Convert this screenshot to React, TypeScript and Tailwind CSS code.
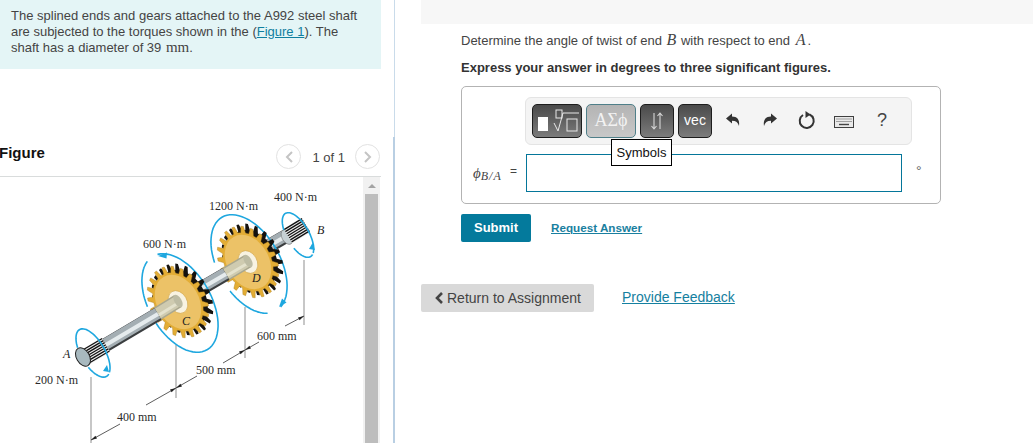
import React from "react";

function pt(cx: number, cy: number, rx: number, ry: number, rot: number, a: number) {
  const r = (rot * Math.PI) / 180;
  const x = rx * Math.cos(a);
  const y = ry * Math.sin(a);
  return [cx + x * Math.cos(r) - y * Math.sin(r), cy + x * Math.sin(r) + y * Math.cos(r)];
}

function gearPath(cx: number, cy: number, rx: number, ry: number, rot: number, teeth: number) {
  const out: string[] = [];
  const step = (2 * Math.PI) / teeth;
  for (let i = 0; i < teeth; i++) {
    const a = i * step;
    const seq: [number, number][] = [
      [a, 0.82],
      [a + step * 0.2, 0.82],
      [a + step * 0.36, 1],
      [a + step * 0.64, 1],
      [a + step * 0.8, 0.82],
    ];
    for (const [t, k] of seq) {
      const p = pt(cx, cy, rx * k, ry * k, rot, t);
      out.push(`${p[0].toFixed(1)} ${p[1].toFixed(1)}`);
    }
  }
  return "M" + out.join("L") + "Z";
}

function arc(cx: number, cy: number, rx: number, ry: number, rot: number, a0: number, a1: number) {
  const pts: string[] = [];
  const n = 48;
  for (let i = 0; i <= n; i++) {
    const p = pt(cx, cy, rx, ry, rot, ((a0 + ((a1 - a0) * i) / n) * Math.PI) / 180);
    pts.push(`${p[0].toFixed(1)} ${p[1].toFixed(1)}`);
  }
  return "M" + pts.join("L");
}

const ROT = 60;
const BLUE = "#1ea7df";

function Gear({ cx, cy }: { cx: number; cy: number }) {
  return (
    <g>
      <path d={gearPath(cx + 4.5, cy - 2.6, 38, 28, ROT, 20)} fill="#15120e" />
      <path d={gearPath(cx, cy, 38, 28, ROT, 20)} fill="#e3ad35" stroke="#a87d22" strokeWidth="0.4" />
      <ellipse cx={cx} cy={cy} rx={29} ry={21} transform={`rotate(${ROT} ${cx} ${cy})`} fill="#ecc267" />
      <ellipse cx={cx} cy={cy} rx={12} ry={9} transform={`rotate(${ROT} ${cx} ${cy})`} fill="#f8f3e2" stroke="#d2a545" strokeWidth="0.6" />
    </g>
  );
}

function Hub({ x1, y1, x2, y2 }: { x1: number; y1: number; x2: number; y2: number }) {
  return (
    <g>
      <line x1={x1} y1={y1} x2={x2} y2={y2} stroke="#a9a78f" strokeWidth={14} />
      <line x1={x1} y1={y1} x2={x2} y2={y2} stroke="#cfcbb0" strokeWidth={11} />
      <line x1={x1 + 1} y1={y1 + 1.5} x2={x2 + 1} y2={y2 + 1.5} stroke="#e4e2cd" strokeWidth={3} />
      <ellipse cx={x2} cy={y2} rx={7} ry={3.6} transform={`rotate(${ROT} ${x2} ${y2})`} fill="#bdbca4" />
    </g>
  );
}

function ShaftSeg({ x1, y1, x2, y2 }: { x1: number; y1: number; x2: number; y2: number }) {
  return (
    <g>
      <line x1={x1} y1={y1} x2={x2} y2={y2} stroke="#3b3e40" strokeWidth={14} />
      <line x1={x1 - 0.5} y1={y1 - 0.8} x2={x2 - 0.5} y2={y2 - 0.8} stroke="#a4aeb3" strokeWidth={11.5} />
      <line x1={x1} y1={y1} x2={x2} y2={y2} stroke="#e5ebed" strokeWidth={4} />
    </g>
  );
}

function Spline({ x1, y1, x2, y2, r }: { x1: number; y1: number; x2: number; y2: number; r: number }) {
  const len = Math.hypot(x2 - x1, y2 - y1);
  const ux = (x2 - x1) / len;
  const uy = (y2 - y1) / len;
  const nx = -uy;
  const ny = ux;
  const rows = [];
  for (let k = -r + 1; k <= r; k += 2.4) {
    rows.push(
      <line key={k} x1={x1 + nx * k} y1={y1 + ny * k} x2={x2 + nx * k} y2={y2 + ny * k} stroke="#111" strokeWidth="1.3" />
    );
  }
  return (
    <g>
      <line x1={x1} y1={y1} x2={x2} y2={y2} stroke="#f0f0f0" strokeWidth={2 * r} />
      {rows}
    </g>
  );
}

function Arrow({ x, y, dx, dy }: { x: number; y: number; dx: number; dy: number }) {
  const nx = -dy;
  const ny = dx;
  return (
    <path
      d={`M${x} ${y}L${x - dx * 6 + nx * 1.6} ${y - dy * 6 + ny * 1.6}L${x - dx * 6 - nx * 1.6} ${y - dy * 6 - ny * 1.6}Z`}
      fill="#222"
    />
  );
}

function Ring({ d }: { d: string }) {
  return <path d={d} fill="none" stroke={BLUE} strokeWidth="1.6" />;
}

const labels: [string, number, number][] = [
  ["1200 N·m", 209, 210],
  ["400 N·m", 274, 201],
  ["600 N·m", 143, 248],
  ["200 N·m", 35, 384],
  ["600 mm", 257, 340],
  ["500 mm", 196, 374],
  ["400 mm", 117, 421],
];

function Italic({ x, y, t }: { x: number; y: number; t: string }) {
  return (
    <text x={x} y={y} fontFamily="'Liberation Serif', serif" fontStyle="italic" fontSize="12" fill="#222">
      {t}
    </text>
  );
}

function Diagram() {
  const ux = 0.87;
  const uy = -0.49;
  return (
    <svg viewBox="0 177 363 266" className="w-[363px] h-[266px] shrink-0">
      {[
        [91, 377, 91, 443],
        [176, 345, 176, 398],
        [245, 307, 245, 358],
        [304, 260, 304, 325],
      ].map((l, i) => (
        <line key={i} x1={l[0]} y1={l[1]} x2={l[2]} y2={l[3]} stroke="#8f8f8f" strokeWidth="1" />
      ))}
      {[
        [91, 440, 120, 424],
        [146, 405, 176, 388],
        [176, 388, 197, 376],
        [223, 363, 245, 350],
        [245, 350, 259, 342],
        [285, 326, 304, 316],
      ].map((l, i) => (
        <line key={i} x1={l[0]} y1={l[1]} x2={l[2]} y2={l[3]} stroke="#333" strokeWidth="0.8" />
      ))}
      <Arrow x={91} y={440} dx={-ux} dy={-uy} />
      <Arrow x={176} y={388} dx={ux} dy={uy} />
      <Arrow x={176} y={388} dx={-ux} dy={-uy} />
      <Arrow x={245} y={350} dx={ux} dy={uy} />
      <Arrow x={245} y={350} dx={-ux} dy={-uy} />
      <Arrow x={304} y={316} dx={ux} dy={uy} />

      {/* B end (farthest) */}
      <ShaftSeg x1={262} y1={250} x2={288} y2={235} />
      <ellipse cx={287} cy={237} rx={8} ry={5} transform="rotate(60 287 237)" fill="#c6d0d4" stroke="#666" strokeWidth="0.5" />
      <Spline x1={288} y1={236} x2={306} y2={225} r={8.5} />
      <Ring d={arc(298, 235, 25, 11, ROT, -243, -22)} />
      <Ring d={arc(298, 235, 25, 11, ROT, 68, -15)} />
      <path d="M312.5 243 L315 250 L309 249 Z" fill={BLUE} />

      {/* gear D */}
      <Ring d={arc(249, 264, 54, 31, ROT, -250, -11)} />
      <Ring d={arc(249, 264, 54, 31, ROT, 16, 75)} />
      <path d="M279 307 L282 298.5 L286.5 302.5 Z" fill={BLUE} />
      <Gear cx={248} cy={262} />
      <Hub x1={226} y1={274} x2={248} y2={261} />
      <Italic x={252} y={282} t="D" />

      {/* shaft C-D */}
      <ShaftSeg x1={178} y1={302} x2={226} y2={274} />

      {/* gear C */}
      <Ring d={arc(180, 303, 54, 31, ROT, -171, 84)} />
      <Ring d={arc(180, 303, 54, 31, ROT, 104, 166)} />
      <path d="M158 256 L167 252.5 L166.5 258.5 Z" fill={BLUE} />
      <Gear cx={178} cy={302} />
      <Hub x1={157} y1={314} x2={178} y2={301} />
      <Italic x={182} y={325} t="C" />

      {/* shaft A-C */}
      <ShaftSeg x1={104} y1={346} x2={158} y2={314} />

      {/* A end */}
      <Spline x1={84} y1={358} x2={106} y2={345} r={8.5} />
      <ellipse cx={83} cy={357} rx={10} ry={6.5} transform="rotate(60 83 357)" fill="#a8b9bf" stroke="#222" strokeWidth="1" />
      <Ring d={arc(93, 353, 27, 12, ROT, -243, -22)} />
      <Ring d={arc(93, 353, 27, 12, ROT, 68, -15)} />
      <path d="M107 365 L109 372 L103 371 Z" fill={BLUE} />

      {labels.map(([t, x, y]) => (
        <text key={t} x={x} y={y} fontFamily="'Liberation Serif', serif" fontSize="12" fill="#2a2a2a">
          {t}
        </text>
      ))}
      <Italic x={63} y={358} t="A" />
      <Italic x={317} y={234} t="B" />
    </svg>
  );
}

function Pager({ dir }: { dir: "l" | "r" }) {
  return (
    <div className="w-[25px] h-[25px] rounded-full border border-[#e2e2e2] bg-white flex items-center justify-center">
      <svg width="10" height="14" viewBox="0 0 10 14">
        <path d={dir === "l" ? "M8 2 L3 7 L8 12" : "M2 2 L7 7 L2 12"} fill="none" stroke="#c4c4c4" strokeWidth="2" />
      </svg>
    </div>
  );
}

function ToolBtn({ className, children }: { className: string; children: React.ReactNode }) {
  return (
    <div className={`h-[34px] rounded-[5px] border flex items-center justify-center text-white shrink-0 ${className}`}>
      {children}
    </div>
  );
}

const dark = "border-[#1d1d1d] bg-gradient-to-b from-[#4a4a4a] to-[#7c7c7c]";

export default function App() {
  return (
    <div className="w-[1033px] h-[443px] flex overflow-hidden bg-white font-['Liberation_Sans',Arial,sans-serif] text-[#333]">
      {/* left */}
      <div className="w-[381px] shrink-0 flex flex-col">
        <div className="h-[69px] bg-[#e4f5f6] pt-[8px] pl-[11px] pr-[20px] text-[13px] leading-[16px] text-[#444]">
          The splined ends and gears attached to the A992 steel shaft are subjected to the torques shown in the{" "}
          (<span className="text-[#0f7f9f] underline">Figure 1</span>). The shaft has a diameter of 39{" "}
          <span className="font-['Liberation_Serif',serif] text-[15px] leading-none ml-[1px]">mm</span>.
        </div>
        <div className="h-[108px] border-b border-[#d9dcdc] flex items-end justify-between pb-[7px] pr-[1px]">
          <div className="font-bold text-[15px] leading-[16px] text-[#111] mb-[8px] -ml-[1px]">Figure</div>
          <div className="flex items-center">
            <Pager dir="l" />
            <span className="text-[13px] text-[#444] ml-[11px] mr-[10px] mt-[2px]">1 of 1</span>
            <Pager dir="r" />
          </div>
        </div>
        <div className="flex flex-1 min-h-0">
          <Diagram />
          <div className="w-[17px] bg-[#f1f1f1] flex flex-col items-center">
            <div className="h-[17px] flex items-center justify-center">
              <div className="w-0 h-0 border-l-[4px] border-r-[4px] border-b-[4px] border-l-transparent border-r-transparent border-b-[#a3a3a3]" />
            </div>
            <div className="w-[13px] flex-1 bg-[#bdbdbd]" />
          </div>
        </div>
      </div>

      {/* divider */}
      <div className="w-[12px] shrink-0" />
      <div className="w-[2px] shrink-0 flex flex-col items-end">
        <div className="w-[1px] h-[137px] bg-[#c9dbea]" />
        <div className="w-[2px] flex-1 bg-[#b9cfe3]" />
      </div>
      <div className="w-[26px] shrink-0" />

      {/* right */}
      <div className="flex-1 min-w-0 flex flex-col">
        <div className="h-[24px] bg-[#f7f7f7] shrink-0" />
        <div className="pl-[40px] pt-[8px]">
          <div className="text-[13px] leading-[16px] text-[#444] whitespace-nowrap">
            Determine the angle of twist of end{" "}
            <span className="font-['Liberation_Serif',serif] italic text-[16px] leading-none mx-[1px]">B</span> with respect to end{" "}
            <span className="font-['Liberation_Serif',serif] italic text-[16px] leading-none mx-[2px]">A</span>.
          </div>
          <div className="mt-[11px] text-[13px] leading-[16px] font-bold text-[#333]">
            Express your answer in degrees to three significant figures.
          </div>

          <div className="relative mt-[10px] w-[480px] h-[118px] border border-[#b3b3b3] rounded-[5px] pl-[63px] pt-[10px]">
            <div className="w-[387px] h-[48px] rounded-[6px] border border-[#e4e4e4] bg-[#f4f4f4] flex items-center pl-[6px]">
              <div className="flex gap-[4px]">
                <ToolBtn className={`w-[50px] ${dark}`}>
                  <svg width="44" height="28" viewBox="0 0 44 28">
                    <rect x="3" y="10" width="10" height="14" fill="#fff" />
                    <rect x="21" y="3" width="6" height="8" fill="none" stroke="#e8e8e8" strokeWidth="1" />
                    <path d="M19 16 L23 24 L28 6 L44 6" fill="none" stroke="#e8e8e8" strokeWidth="1" />
                    <rect x="32" y="12" width="10" height="12" fill="none" stroke="#e8e8e8" strokeWidth="1" />
                  </svg>
                </ToolBtn>
                <ToolBtn className="w-[50px] border-[#4f7f89] bg-gradient-to-b from-[#b4b4b4] to-[#c8c8c8]">
                  <span className="font-['Liberation_Serif',serif] text-[18px] leading-none text-[#f2f2f2] -mt-[2px]">ΑΣϕ</span>
                </ToolBtn>
                <ToolBtn className={`w-[34px] ${dark}`}>
                  <svg width="18" height="20" viewBox="0 0 18 20">
                    <path d="M6 2 V18 M3.5 15 L6 18 L8.5 15 M12 18 V2 M9.5 5 L12 2 L14.5 5" fill="none" stroke="#d8d8d8" strokeWidth="1.1" />
                  </svg>
                </ToolBtn>
                <ToolBtn className={`w-[34px] ${dark}`}>
                  <span className="text-[14px] -mt-[2px]">vec</span>
                </ToolBtn>
              </div>
              <div className="flex items-center ml-[13px] -mt-[2px] text-[#444]">
                <svg className="w-[16px] h-[16px]" viewBox="0 0 16 16">
                  <path d="M1 6.5 L7 1.5 V4.5 C12 4.5 15 7.5 14 14 C13 10.5 11 8.8 7 8.8 V11.5 Z" fill="#333" />
                </svg>
                <svg className="w-[16px] h-[16px] ml-[21px]" viewBox="0 0 16 16">
                  <path d="M15 6.5 L9 1.5 V4.5 C4 4.5 1 7.5 2 14 C3 10.5 5 8.8 9 8.8 V11.5 Z" fill="#333" />
                </svg>
                <svg className="w-[18px] h-[20px] ml-[20px]" viewBox="0 0 18 20">
                  <path d="M11.5 4.5 A7 7 0 1 1 5 5" fill="none" stroke="#333" strokeWidth="2" />
                  <path d="M7.5 1 L12.5 4.5 L7.5 8 Z" fill="#333" />
                </svg>
                <svg className="w-[20px] h-[12px] ml-[18px] mt-[4px]" viewBox="0 0 20 12">
                  <rect x="0.5" y="0.5" width="19" height="11" fill="#e9e9e9" stroke="#3f3f3f" />
                  <path d="M2.5 3 H17.5 M2.5 5.5 H17.5" stroke="#555" strokeWidth="1.2" strokeDasharray="1 1" />
                  <path d="M5 8.5 H15" stroke="#444" strokeWidth="1.4" />
                </svg>
                <span className="ml-[23px] text-[18px] leading-none text-[#444]">?</span>
              </div>
            </div>
            <div className="flex items-center mt-[9px] -ml-[52px]">
              <div className="w-[53px] flex items-center whitespace-nowrap text-[#444]">
                <span className="w-[37px] flex items-center">
                  <span className="font-['Liberation_Serif',serif] italic text-[15px]">ϕ</span>
                  <span className="font-['Liberation_Serif',serif] italic text-[12px] tracking-[1px] mt-[5px]">B/A</span>
                </span>
                <span className="text-[12px] -mt-[4px]">=</span>
              </div>
              <div className="w-[376px] h-[38px] border border-[#04769a] bg-white" />
              <span className="ml-[14px] text-[14px] text-[#666] -mt-[4px]">°</span>
            </div>
            <div className="absolute left-[149px] top-[52px] w-[61px] h-[27px] border border-black bg-white flex items-center justify-center text-[13px] text-[#111]">
              Symbols
            </div>
          </div>

          <div className="mt-[10px] flex items-center">
            <div className="w-[70px] h-[28px] rounded-[2px] bg-[#047a9c] text-white font-bold text-[13px] flex items-center justify-center">
              Submit
            </div>
            <span className="ml-[20px] text-[11.7px] font-bold text-[#1a7f9f] underline">Request Answer</span>
          </div>
        </div>
        <div className="mt-[42px] flex items-center">
          <div className="w-[173px] h-[28px] rounded-[2px] bg-[#d9d9d9] text-[14px] text-[#444] flex items-center pl-[13px] gap-[3px]">
            <svg width="10" height="14" viewBox="0 0 10 14">
              <path d="M8 2 L3 7 L8 12" fill="none" stroke="#444" strokeWidth="2.6" />
            </svg>
            Return to Assignment
          </div>
          <span className="ml-[28px] text-[14px] text-[#1580a0] underline -mt-[2px]">Provide Feedback</span>
        </div>
      </div>
    </div>
  );
}
